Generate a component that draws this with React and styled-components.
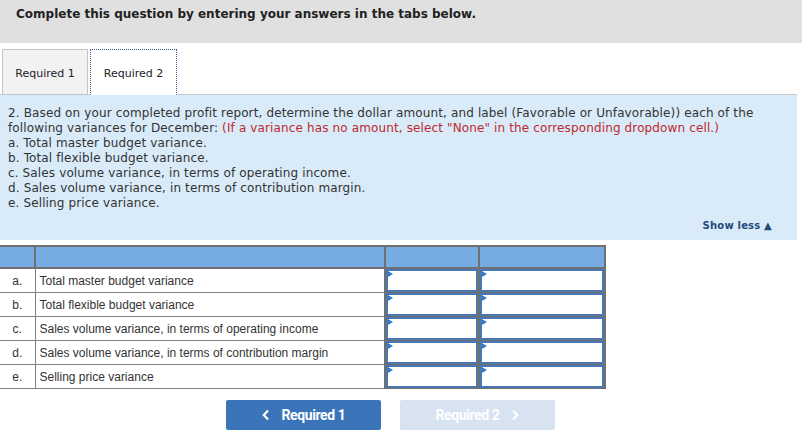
import React from "react";
import styled, { createGlobalStyle } from "styled-components";

const GlobalStyle = createGlobalStyle`
  body {
    margin: 0;
    background: #fff;
    font-family: "DejaVu Sans", Verdana, sans-serif;
  }
`;

const Page = styled.div`
  width: 802px;
  height: 446px;
  overflow: hidden;
`;

const Header = styled.div`
  height: 43px;
  background: #e0e0e0;
  padding: 7px 0 0 16px;
  box-sizing: border-box;
  font-size: 12px;
  font-weight: bold;
  color: #222;
`;

const TabBar = styled.div`
  display: flex;
  align-items: flex-end;
  gap: 2px;
  height: 52px;
  padding-left: 2px;
  box-sizing: border-box;
  border-bottom: 1px solid #c8c8c8;
  width: 797px;
`;

const Tab = styled.div`
  height: 46px;
  box-sizing: border-box;
  display: flex;
  align-items: center;
  justify-content: center;
  padding-top: 2px;
  font-size: 11px;
  color: #222;
  margin-bottom: -1px;
  width: ${({ $active }) => ($active ? "87px" : "86px")};
  background: ${({ $active }) => ($active ? "#fff" : "#f2f2f2")};
  border: ${({ $active }) => ($active ? "1px dotted #3a5f8f" : "1px solid #c4c4c4")};
  border-bottom: ${({ $active }) => ($active ? "1px solid #fff" : "1px solid #c4c4c4")};
`;

const Panel = styled.div`
  width: 797px;
  height: 145px;
  background: #d9ebf9;
  box-sizing: border-box;
  padding: 11px 8px 0 8px;
  position: relative;
  font-size: 12px;
  letter-spacing: 0.13px;
  line-height: 15px;
  color: #333;
`;

const Red = styled.span`
  color: #c0282d;
`;

const ShowLess = styled.div`
  position: absolute;
  right: 25px;
  bottom: 7px;
  font-size: 10px;
  font-weight: bold;
  letter-spacing: 0.2px;
  color: #24497c;
`;

const Table = styled.table`
  margin-top: 5px;
  border-collapse: collapse;
  font-family: "Liberation Sans", Arial, sans-serif;
  font-size: 12px;
  color: #333;
`;

const HeadCell = styled.th`
  background: #76abe3;
  height: 20px;
  border: 2px solid #707070;
  border-left: ${({ $first }) => ($first ? "none" : "2px solid #707070")};
  padding: 0;
  width: ${({ $w }) => $w}px;
`;

const Cell = styled.td`
  padding: 0 4px;
  border-bottom: 1px solid #808080;
  border-right: 1px solid #808080;
  text-align: ${({ $center }) => ($center ? "center" : "left")};
`;

const InputCell = styled.td`
  padding: 0;
  border: 2px solid #707070;
  border-top: none;
  border-bottom: 1px solid #707070;
`;

const Input = styled.div`
  position: relative;
  height: 19px;
  border: 2px solid #4a77b0;
  background: #fff;
  &::before {
    content: "";
    position: absolute;
    left: 0;
    top: 0;
    border-left: 5px solid #3a78c4;
    border-top: 3px solid transparent;
    border-bottom: 3px solid transparent;
  }
`;

const Nav = styled.div`
  display: flex;
  gap: 19px;
  padding-left: 226px;
  margin-top: 11px;
`;

const NavButton = styled.div`
  width: 155px;
  height: 30px;
  border-radius: 2px;
  display: flex;
  align-items: center;
  justify-content: center;
  gap: 12px;
  font-family: Roboto, "Liberation Sans", Arial, sans-serif;
  font-weight: bold;
  font-size: 14px;
  letter-spacing: -0.4px;
  color: #fff;
  background: ${({ $disabled }) => ($disabled ? "#d8e3f1" : "#3a75b9")};
`;

const Chevron = ({ dir }) => (
  <svg width="8" height="12" viewBox="0 0 8 12">
    <path
      d={dir === "left" ? "M6 1.5 L1.8 6 L6 10.5" : "M2 1.5 L6.2 6 L2 10.5"}
      fill="none"
      stroke="#fff"
      strokeWidth="2.2"
    />
  </svg>
);

const rows = [
  ["a.", "Total master budget variance"],
  ["b.", "Total flexible budget variance"],
  ["c.", "Sales volume variance, in terms of operating income"],
  ["d.", "Sales volume variance, in terms of contribution margin"],
  ["e.", "Selling price variance"],
];

export default function App() {
  return (
    <Page>
      <GlobalStyle />
      <Header>Complete this question by entering your answers in the tabs below.</Header>
      <TabBar>
        <Tab>Required 1</Tab>
        <Tab $active>Required 2</Tab>
      </TabBar>
      <Panel>
        2. Based on your completed profit report, determine the dollar amount, and label (Favorable or
        Unfavorable)) each of the following variances for December:{" "}
        <Red>(If a variance has no amount, select "None" in the corresponding dropdown cell.)</Red>
        <br />
        a. Total master budget variance.
        <br />
        b. Total flexible budget variance.
        <br />
        c. Sales volume variance, in terms of operating income.
        <br />
        d. Sales volume variance, in terms of contribution margin.
        <br />
        e. Selling price variance.
        <ShowLess>Show less ▲</ShowLess>
      </Panel>
      <Table>
        <thead>
          <tr>
            <HeadCell $first $w={34} />
            <HeadCell $w={348} />
            <HeadCell $w={92} />
            <HeadCell $w={124} />
          </tr>
        </thead>
        <tbody>
          {rows.map(([k, label]) => (
            <tr key={k}>
              <Cell $center>{k}</Cell>
              <Cell>{label}</Cell>
              <InputCell>
                <Input />
              </InputCell>
              <InputCell>
                <Input />
              </InputCell>
            </tr>
          ))}
        </tbody>
      </Table>
      <Nav>
        <NavButton>
          <Chevron dir="left" />
          Required 1
        </NavButton>
        <NavButton $disabled>
          Required 2
          <Chevron dir="right" />
        </NavButton>
      </Nav>
    </Page>
  );
}
